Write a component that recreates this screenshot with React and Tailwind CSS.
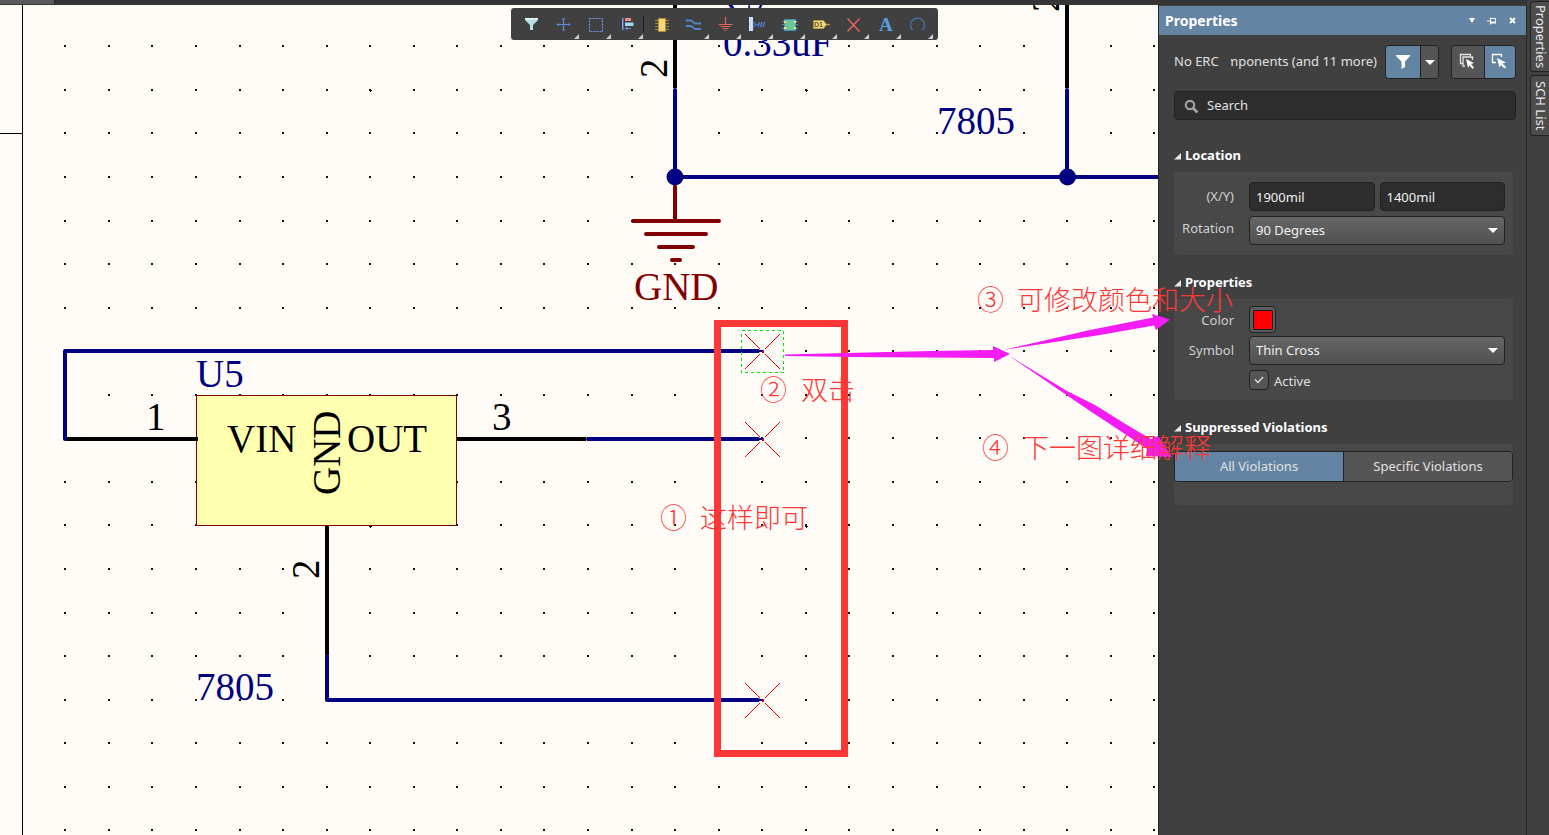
import React, { useState } from "react";

const NAVY = "#000080";
const MAROON = "#800000";

const dots = [];
for (let i = 0; i < 26; i++) {
  for (let j = 0; j < 19; j++) {
    dots.push([Math.round(64.3 + i * 43.56), Math.round(45.3 + j * 43.56)]);
  }
}

function Cross({ x, y }) {
  return (
    <g stroke="#e80000" strokeWidth="1" shapeRendering="crispEdges">
      <path
        d={`M${x - 18} ${y - 17}L${x - 3} ${y - 2}M${x + 2} ${y + 3}L${x + 17} ${y + 18}M${x + 17} ${y - 17}L${x + 2} ${y - 2}M${x - 3} ${y + 3}L${x - 18} ${y + 18}`}
      />
      <rect x={x - 1} y={y} width="2" height="2" fill="#e80000" stroke="none" />
    </g>
  );
}

function Schematic() {
  return (
    <svg className="absolute inset-0 h-full w-full" fill="none" aria-label="Schematic sheet">
      <g transform="translate(0 -5)">
        <g fill="#111111" shapeRendering="crispEdges">
          {dots.map(([x, y]) => (
            <rect key={`${x}-${y}`} x={x} y={y} width="2" height="2" />
          ))}
          <path d="M369 90h3v1h-3zM370 89h1v3h-1zM805 90h3v1h-3zM806 89h1v3h-1zM369 526h3v1h-3zM370 525h1v3h-1zM805 526h3v1h-3zM806 525h1v3h-1z" />
        </g>
        <path d="M22.500 0V900M0 133.500H22" stroke="#000" shapeRendering="crispEdges" />

        <rect x="196.500" y="395.500" width="260" height="130" fill="#ffffb0" stroke={MAROON} />

        <g strokeWidth="4" strokeLinecap="round">
          <g stroke="#000" strokeLinecap="butt">
            <path d="M66 439H198M457 439H586M327 526V655M675 0V88M1067 0V88" />
          </g>
          <path
            stroke={NAVY}
            strokeLinejoin="round"
            d="M65 439V351H758M588 439H758M327 656V700H758M675 90V177M1067 90V177M675 177H1180"
          />
          <path stroke={NAVY} strokeWidth="2" d="M758 351H763M758 439H763M758 700H763" />
          <path stroke={MAROON} d="M675 186V220M633 221H719M646 234H706M659 247H693M672 260H680" />
        </g>
        <circle cx="675" cy="177" r="8.5" fill={NAVY} />
        <circle cx="1067.500" cy="177" r="8.500" fill={NAVY} />

        <g className="font-['Liberation_Serif',serif] text-[39px]" fill={NAVY}>
          <text x="726" y="12">C7</text>
          <text x="723" y="56">0.33uF</text>
          <text x="937" y="134">7805</text>
          <text x="196" y="387">U5</text>
          <text x="196" y="700">7805</text>
          <text x="634" y="300" fill={MAROON}>GND</text>
          <g fill="#000">
            <text x="227" y="452">VIN</text>
            <text x="347" y="452">OUT</text>
            <text transform="translate(340 495) rotate(-90)">GND</text>
            <text x="146" y="430">1</text>
            <text x="492" y="430">3</text>
            <text transform="translate(667 78) rotate(-90)">2</text>
            <text transform="translate(319 579) rotate(-90)">2</text>
            <text transform="translate(1059 12) rotate(-90)">2</text>
          </g>
        </g>

        <Cross x={763} y={351} />
        <Cross x={763} y={439} />
        <Cross x={763} y={700} />
        <rect
          x="741.500" y="330.500" width="42" height="42"
          stroke="#00ee00" strokeDasharray="3 3" shapeRendering="crispEdges"
        />
      </g>
    </svg>
  );
}

function Annotations() {
  return (
    <svg className="pointer-events-none absolute inset-0 z-20 h-full w-full" fill="none">
      <rect x="717.500" y="323.500" width="127" height="430" stroke="#fb3837" strokeWidth="7" />
      <g fill="#f41cf4">
        <path d="M785 354.500L930 351L993 350V346L1010 354L994 362V358L850 357L785 356Z" />
        <path d="M1003 350L1090 330L1153 317.500L1152 314L1170 319.500L1156 330L1154 325.500L1100 335Z" />
        <path d="M1008 355L1067 391L1095 405L1127 425L1151 439L1158 436L1172 457L1146 456L1147 449L1125 434L1090 411L1065 394Z" />
      </g>
      <g fill="#fb3837" className="font-['Noto_Sans_CJK_SC',sans-serif] text-[27px] font-light">
        <text x="660" y="528">①</text>
        <text x="700" y="528">这样即可</text>
        <text x="760" y="400">②</text>
        <text x="801" y="400">双击</text>
        <text x="977" y="310">③</text>
        <text x="1017" y="310">可修改颜色和大小</text>
        <text x="982" y="458">④</text>
        <text x="1022" y="458">下一图详细解释</text>
      </g>
    </svg>
  );
}

const tools = [
  {
    name: "Filter",
    flat: true,
    art: (
      <g>
        <path d="M2 2h13v2l-5 5v5H7V9L2 4z" fill="#b9dfe9" />
        <path d="M2 2h13v1.500H2z" fill="#e9f7fa" />
      </g>
    ),
  },
  {
    name: "Move",
    art: (
      <g stroke="#5f8ae0" strokeWidth="1.200">
        <path d="M8.500 2v13M2 8.500h13" />
        <path d="M7 3.500L8.500 2L10 3.500M7 13.500L8.500 15L10 13.500M3.500 7L2 8.500L3.500 10M13.500 7L15 8.500L13.500 10" strokeWidth=".8" />
      </g>
    ),
  },
  {
    name: "Select area",
    art: <rect x="2.500" y="2.500" width="13" height="13" stroke="#7794ee" strokeDasharray="2 1" />,
  },
  {
    name: "Align",
    art: (
      <g>
        <path d="M3 2h1.500v12H3z" fill="#7d9be0" />
        <path d="M6 2h6v3H6z" fill="#f08a88" />
        <path d="M6 6.500h8.500v3.500H6z" fill="#9bdcf2" />
        <path d="M6 12.500h6M8.500 11L6.500 12.500L8.500 14" stroke="#6f94e6" />
      </g>
    ),
  },
  {
    name: "Place part",
    flat: true,
    art: (
      <g>
        <path d="M2 4.500h14M2 7.500h14M2 10.500h14M2 13.500h14" stroke="#a8872f" />
        <rect x="5.500" y="2.500" width="7" height="13" fill="#f6d67c" stroke="#b08d38" />
      </g>
    ),
  },
  {
    name: "Place wire",
    art: (
      <path d="M1 4.500h5l4 3h6M1 10h5l4 3h6" stroke="#4d87c4" strokeWidth="1.800" />
    ),
  },
  {
    name: "Place ground",
    art: (
      <path d="M8.500 1v7.500M1.500 8.500h14M3.500 10.500h10M5.500 12.500h6M7.500 14.500h2" stroke="#e4645c" strokeWidth="1.200" />
    ),
  },
  {
    name: "Place bus",
    art: (
      <g>
        <path d="M0 1h4v14H0z" fill="#cfe0fa" />
        <path d="M4 5.500L6.500 8.500L4 11.500M6 8.500h3" stroke="#4377c2" strokeWidth="1.200" />
        <path d="M9 11l1.500-5M11.500 11l1.500-5M14 11l1.500-5" stroke="#4a80d6" strokeWidth="1.400" />
      </g>
    ),
  },
  {
    name: "Place sheet symbol",
    art: (
      <g>
        <path d="M1 5.500h16M1 8.500h16M1 12.500h16" stroke="#4d87d4" />
        <rect x="3.500" y="3.500" width="11" height="11" fill="#6cc796" stroke="#4d87c4" />
        <path d="M3 5h2v2H3zM3 11h2v2H3zM13 5h2v2h-2zM13 11h2v2h-2z" fill="#f0e58a" />
      </g>
    ),
  },
  {
    name: "Place port",
    art: (
      <g>
        <path d="M0.500 4.500h10l3 4l-3 4h-10z" fill="#f7db86" stroke="#b79241" />
        <path d="M13 8.500h4" stroke="#c9a24a" strokeWidth="1.300" />
        <text x="1" y="11" fill="#6b5120" className="font-['Liberation_Sans',sans-serif] text-[7px] font-bold">D1</text>
      </g>
    ),
  },
  {
    name: "Place no ERC",
    art: <path d="M2.500 2.500l12 13M14.500 2.500L2.500 15.500" stroke="#e4645c" strokeWidth="1.500" />,
  },
  {
    name: "Place text",
    art: (
      <text x="2" y="15" fill="#5b9de0" className="font-['Liberation_Serif',serif] text-[19px] font-bold">A</text>
    ),
  },
  {
    name: "Place arc",
    art: <path d="M3.500 14A7 7 0 1 1 13.500 14" stroke="#4377b0" strokeWidth="1.300" />,
  },
];

function Tool({ tool }) {
  return (
    <button type="button" aria-label={tool.name} className="relative grid w-8 place-items-center">
      <svg width="17" height="17" fill="none" overflow="visible">{tool.art}</svg>
      {!tool.flat && (
        <svg className="absolute bottom-px right-0" width="5" height="5">
          <path d="M5 0V5H0Z" fill="#cfcfcf" />
        </svg>
      )}
    </button>
  );
}

function Toolbar() {
  return (
    <div
      role="toolbar"
      aria-label="Active bar"
      className="absolute left-[511px] top-[3px] z-10 flex h-8 rounded-[3px] bg-[#404040] pl-1 pr-[5px]"
    >
      {tools.slice(0, 4).map((t) => (
        <Tool key={t.name} tool={t} />
      ))}
      <span className="mr-px h-4 w-px self-center bg-[#1f1f1f]" />
      {tools.slice(4).map((t) => (
        <Tool key={t.name} tool={t} />
      ))}
    </div>
  );
}

function Section({ title, children, className }) {
  return (
    <section>
      <h2 className="flex h-5 items-center gap-1 text-[13px] font-bold text-white">
        <svg width="7" height="7"><path d="M7 0V6.500H0Z" fill="#e8e8e8" /></svg>
        {title}
      </h2>
      <div className={`mr-[3px] mt-1.5 rounded-[3px] bg-[#484848] ${className}`}>{children}</div>
    </section>
  );
}

function Select({ id, options }) {
  return (
    <div className="relative flex-1">
      <select
        id={id}
        className="block h-[29px] w-full appearance-none rounded-[4px] border border-[#222222] bg-linear-to-b from-[#676767] to-[#505050] px-1.5 pt-px text-[13px] text-[#f0f0f0]"
      >
        {options.map((o) => (
          <option key={o}>{o}</option>
        ))}
      </select>
      <svg className="pointer-events-none absolute right-[7px] top-3" width="10" height="5">
        <path d="M0 0H10L5 5Z" fill="#fff" />
      </svg>
    </div>
  );
}

const rowClass = "flex items-center gap-[15px]";
const labelClass = "w-[60px] shrink-0 text-right text-[#d0d0d0]";
const fieldClass =
  "h-[29px] w-0 flex-1 rounded-[4px] border border-[#222222] bg-[#2d2d2d] px-1.5 text-[13px] text-[#f0f0f0]";

function PropertiesPanel() {
  const [scope, setScope] = useState("all");
  return (
    <aside className="flex w-[369px] shrink-0 flex-col border-l border-r border-[#262626] bg-[#404040] text-[13px] text-[#e0e0e0]">
      <header className="mt-px flex h-[29px] items-center bg-[#6384a3] pl-1.5 pr-2">
        <h1 className="flex-1 text-[14px] font-bold text-white">Properties</h1>
        <div className="flex items-center gap-2">
          <button type="button" aria-label="Panel menu" className="grid size-3 place-items-center">
            <svg width="6" height="5"><path d="M0 0H6L3 5Z" fill="#fff" /></svg>
          </button>
          <button type="button" aria-label="Pin panel" className="grid size-3 place-items-center">
            <svg width="10" height="8" fill="none" stroke="#fff">
              <path d="M0 4H3.500M3.500 0.500V7.500M4 1.500H8.500V6" />
              <path d="M4 5.500H9" strokeWidth="2" />
            </svg>
          </button>
          <button type="button" aria-label="Close panel" className="grid size-3 place-items-center">
            <svg width="7" height="7"><path d="M1 1L6 6M6 1L1 6" stroke="#fff" strokeWidth="1.800" /></svg>
          </button>
        </div>
      </header>

      <div className="flex flex-col pl-[15px] pr-2.5 pt-2.5">
        <div className="flex h-[34px] items-center">
          <span>No ERC</span>
          <span className="ml-3 flex w-0 flex-1 justify-end overflow-hidden whitespace-nowrap">
            Components (and 11 more)
          </span>
          <div className="ml-2 flex h-full w-[54px] overflow-hidden rounded-[4px] border border-[#222222]">
            <button type="button" aria-label="Filter" className="grid flex-1 place-items-center bg-[#6384a3]">
              <svg width="14" height="14"><path d="M0 0H14V1L9 6.500V12L5.500 14V6.500L0 1Z" fill="#fff" /></svg>
            </button>
            <button type="button" aria-label="Filter options" className="grid w-[18px] place-items-center border-l border-[#222222] bg-[#555555]">
              <svg width="10" height="5"><path d="M0 0H10L5 5Z" fill="#fff" /></svg>
            </button>
          </div>
          <div className="ml-3 flex h-full w-[65px] overflow-hidden rounded-[4px] border border-[#222222]">
            <button type="button" aria-label="Select from all" className="grid flex-1 place-items-center bg-[#555555] pb-0.5 pr-0.5">
              <svg width="16" height="16" fill="none">
                <path d="M4 10.500H1.500V1.500H11.500V3M6 13H4V4H13.500V7" stroke="#e4e4e4" strokeWidth="1.300" />
                <path d="M7 6L15 10L12 11L15 14.500L13.500 16L10.500 12.500L9 15Z" fill="#fff" />
              </svg>
            </button>
            <button type="button" aria-label="Select only" className="grid w-[31px] place-items-center border-l border-[#222222] bg-[#6384a3] pb-0.5 pr-0.5">
              <svg width="16" height="16" fill="none">
                <path d="M5 9.500H1.500V1.500H10.500V4" stroke="#fff" strokeWidth="1.300" />
                <path d="M6 5L15 9.500L11.500 10.500L15 14L13.500 15.500L10 12L8.500 14.500Z" fill="#fff" />
              </svg>
            </button>
          </div>
        </div>

        <div className="mt-3 flex h-[29px] items-center gap-2 rounded-[4px] border border-[#222222] bg-[#2d2d2d] px-[9px]">
          <svg width="15" height="14" fill="none" stroke="#a0a0a0" className="shrink-0">
            <circle cx="6" cy="6" r="4.200" strokeWidth="2.200" />
            <path d="M9 9L13.500 13.500" strokeWidth="2.800" />
          </svg>
          <input
            aria-label="Search"
            placeholder="Search"
            className="w-full bg-transparent text-[13px] outline-none placeholder:text-[#e0e0e0]"
          />
        </div>

        <div className="mt-[26px] flex flex-col gap-[18px]">
          <Section title="Location" className="flex flex-col gap-[5px] pb-2.5 pr-2 pt-2.5">
            <div className={rowClass}>
              <label htmlFor="loc-x" className={labelClass}>(X/Y)</label>
              <div className="flex flex-1 gap-[5px]">
                <input id="loc-x" defaultValue="1900mil" className={fieldClass} />
                <input aria-label="Y" defaultValue="1400mil" className={fieldClass} />
              </div>
            </div>
            <div className={rowClass}>
              <label htmlFor="rotation" className={`${labelClass} pb-1`}>Rotation</label>
              <Select id="rotation" options={["90 Degrees", "0 Degrees", "180 Degrees", "270 Degrees"]} />
            </div>
          </Section>

          <Section title="Properties" className="flex flex-col gap-[3px] pb-2.5 pr-2 pt-[7px]">
            <div className={rowClass}>
              <label htmlFor="color" className={`${labelClass} pt-0.5`}>Color</label>
              <button
                id="color"
                type="button"
                className="grid h-[27px] w-[27px] place-items-center rounded-[4px] border border-[#222222] bg-[#5c5c5c]"
              >
                <span className="size-5 rounded-[1px] border border-[#1c1c1c] bg-[#ff0000]" />
              </button>
            </div>
            <div className={rowClass}>
              <label htmlFor="symbol" className={`${labelClass} pt-px`}>Symbol</label>
              <Select id="symbol" options={["Thin Cross", "Thick Cross", "Small Cross", "Checkbox", "Triangle"]} />
            </div>
            <label className="ml-[75px] mt-0.5 flex items-center gap-[5px]">
              <span className="relative grid size-5 place-items-center">
                <input
                  type="checkbox"
                  defaultChecked
                  className="peer size-5 appearance-none rounded-[4px] border border-[#222222] bg-[#555555]"
                />
                <svg
                  width="10" height="8" fill="none"
                  className="pointer-events-none absolute hidden peer-checked:block"
                >
                  <path d="M1 3.500L4 6.500L9 1" stroke="#e0e0e0" strokeWidth="1.300" />
                </svg>
              </span>
              <span className="pt-0.5 leading-[18px]">Active</span>
            </label>
          </Section>

          <Section title="Suppressed Violations" className="pb-[23px] pt-[7px]">
            <div className="flex h-[31px] overflow-hidden rounded-[4px] border border-[#222222]">
              <button
                type="button"
                aria-pressed={scope === "all"}
                onClick={() => setScope("all")}
                className={`flex-1 ${scope === "all" ? "bg-[#6384a3]" : "bg-[#555555]"}`}
              >
                All Violations
              </button>
              <button
                type="button"
                aria-pressed={scope === "specific"}
                onClick={() => setScope("specific")}
                className={`flex-1 border-l border-[#222222] ${scope === "specific" ? "bg-[#6384a3]" : "bg-[#555555]"}`}
              >
                Specific Violations
              </button>
            </div>
          </Section>
        </div>
      </div>
    </aside>
  );
}

function SideRail() {
  const tab =
    "ml-[3px] flex items-center justify-center rounded-l-[4px] border border-r-0 border-[#222222] bg-[#4d4d4d] text-[13px] leading-4 text-[#e8e8e8] [writing-mode:vertical-rl]";
  return (
    <nav className="flex w-[22px] shrink-0 flex-col gap-[3px] bg-[#404040] pt-px">
      <button type="button" className={`${tab} h-[71px] pl-0.5`}>Properties</button>
      <button type="button" className={`${tab} h-[61px] pl-0.5`}>SCH List</button>
    </nav>
  );
}

export default function App() {
  return (
    <div className="relative flex h-screen overflow-hidden bg-[#353535] font-['Noto_Sans','Open_Sans',sans-serif]">
      <div className="flex min-w-0 flex-1 flex-col">
        <div className="h-[5px] shrink-0">
          <div className="h-1 w-[55px] border-r border-[#222222] bg-[#5a5a5a]" />
        </div>
        <div className="flex min-h-0 flex-1">
          <main className="relative min-w-0 flex-1 overflow-hidden bg-[#fffcf8]">
            <Schematic />
            <Toolbar />
          </main>
          <PropertiesPanel />
        </div>
      </div>
      <SideRail />
      <Annotations />
    </div>
  );
}
